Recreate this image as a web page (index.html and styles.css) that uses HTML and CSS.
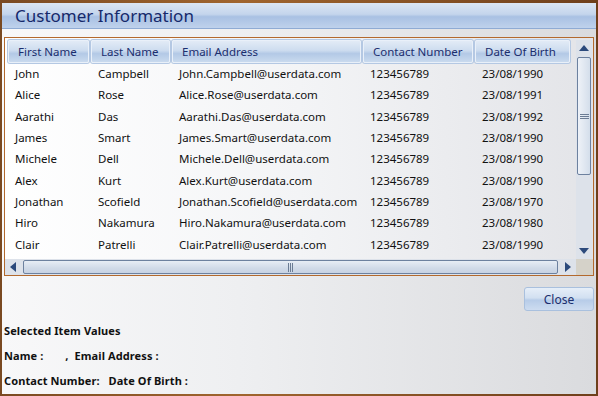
FILE: index.html
```html
<!doctype html>
<html lang="en">
<head>
  <meta charset="utf-8">
  <title>Customer Information</title>
  <link rel="stylesheet" href="styles.css">
</head>
<body>
  <div class="window">
    <div class="titleBar">Customer Information</div>
    <div class="content">
      <div class="grid">
        <div class="gridMain">
          <div class="gridTable">
            <div class="gridRow gridHeading">
              <div class="gridHead">First Name</div>
              <div class="gridHead">Last Name</div>
              <div class="gridHead">Email Address</div>
              <div class="gridHead">Contact Number</div>
              <div class="gridHead">Date Of Birth</div>
            </div>
            <div class="gridRow"><div class="gridCell">John</div><div class="gridCell">Campbell</div><div class="gridCell">John.Campbell@userdata.com</div><div class="gridCell">123456789</div><div class="gridCell">23/08/1990</div></div>
            <div class="gridRow"><div class="gridCell">Alice</div><div class="gridCell">Rose</div><div class="gridCell">Alice.Rose@userdata.com</div><div class="gridCell">123456789</div><div class="gridCell">23/08/1991</div></div>
            <div class="gridRow"><div class="gridCell">Aarathi</div><div class="gridCell">Das</div><div class="gridCell">Aarathi.Das@userdata.com</div><div class="gridCell">123456789</div><div class="gridCell">23/08/1992</div></div>
            <div class="gridRow"><div class="gridCell">James</div><div class="gridCell">Smart</div><div class="gridCell">James.Smart@userdata.com</div><div class="gridCell">123456789</div><div class="gridCell">23/08/1990</div></div>
            <div class="gridRow"><div class="gridCell">Michele</div><div class="gridCell">Dell</div><div class="gridCell">Michele.Dell@userdata.com</div><div class="gridCell">123456789</div><div class="gridCell">23/08/1990</div></div>
            <div class="gridRow"><div class="gridCell">Alex</div><div class="gridCell">Kurt</div><div class="gridCell">Alex.Kurt@userdata.com</div><div class="gridCell">123456789</div><div class="gridCell">23/08/1990</div></div>
            <div class="gridRow"><div class="gridCell">Jonathan</div><div class="gridCell">Scofield</div><div class="gridCell">Jonathan.Scofield@userdata.com</div><div class="gridCell">123456789</div><div class="gridCell">23/08/1970</div></div>
            <div class="gridRow"><div class="gridCell">Hiro</div><div class="gridCell">Nakamura</div><div class="gridCell">Hiro.Nakamura@userdata.com</div><div class="gridCell">123456789</div><div class="gridCell">23/08/1980</div></div>
            <div class="gridRow"><div class="gridCell">Clair</div><div class="gridCell">Patrelli</div><div class="gridCell">Clair.Patrelli@userdata.com</div><div class="gridCell">123456789</div><div class="gridCell">23/08/1990</div></div>
          </div>
          <div class="vScroll">
            <div class="arrowBtn"><svg width="10" height="6" viewBox="0 0 10 6"><path d="M0 6 L5 0 L10 6 Z" fill="#2c4a7c"/></svg></div>
            <div class="vThumb">
              <svg width="9" height="5" viewBox="0 0 9 5"><path d="M0 .5H9M0 2.5H9M0 4.5H9" stroke="#6b7c94" stroke-width="1"/></svg>
            </div>
            <div class="vTrack"></div>
            <div class="arrowBtn"><svg width="10" height="6" viewBox="0 0 10 6"><path d="M0 0 L5 6 L10 0 Z" fill="#2c4a7c"/></svg></div>
          </div>
        </div>
        <div class="hScrollRow">
          <div class="hScroll">
            <div class="arrowBtn"><svg width="6" height="10" viewBox="0 0 6 10"><path d="M6 0 L0 5 L6 10 Z" fill="#2c4a7c"/></svg></div>
            <div class="hThumb">
              <svg width="5" height="9" viewBox="0 0 5 9"><path d="M.5 0V9M2.5 0V9M4.5 0V9" stroke="#6b7c94" stroke-width="1"/></svg>
            </div>
            <div class="arrowBtn"><svg width="6" height="10" viewBox="0 0 6 10"><path d="M0 0 L6 5 L0 10 Z" fill="#2c4a7c"/></svg></div>
          </div>
          <div class="scrollCorner"></div>
        </div>
      </div>
      <div class="buttonRow">
        <button class="closeButton">Close</button>
      </div>
      <div class="selected">
        <div class="selectedLine">Selected Item Values</div>
        <div class="selectedLine">Name : <span class="gap"></span>, &nbsp;Email Address :</div>
        <div class="selectedLine">Contact Number: &nbsp; Date Of Birth :</div>
      </div>
    </div>
  </div>
</body>
</html>
```

FILE: styles.css
```css
html, body {
  margin: 0;
  height: 100%;
}
body {
  background: linear-gradient(to right, #7a4a22, #a0652e 40%, #6e3f1b);
  padding: 3px 2px 2px 2px;
  box-sizing: border-box;
  font-family: "Noto Sans", "DejaVu Sans", sans-serif;
}
.window {
  height: 100%;
  display: flex;
  flex-direction: column;
  background: linear-gradient(to right, #f8f8f9 0%, #eeeff1 40%, #dadbde 100%);
  box-sizing: border-box;
}
.titleBar {
  height: 26px;
  box-sizing: border-box;
  padding: 1px 0 0 13px;
  font-size: 17px;
  line-height: 24px;
  color: #15296b;
  background: linear-gradient(to bottom, #dbe6f3 0%, #c4d5ec 45%, #a9c1e3 55%, #bfd2ec 100%);
  border-bottom: 1px solid #8fabd4;
}
.content {
  flex: 1;
  display: flex;
  flex-direction: column;
  padding: 8px 2px 0 2px;
}
.grid {
  height: 239px;
  box-sizing: border-box;
  border: 1px solid #b3692d;
  display: flex;
  flex-direction: column;
  background: linear-gradient(to right, #ffffff 0%, #f3f4f6 50%, #e3e4e8 100%);
}
.gridMain {
  flex: 1;
  display: flex;
  min-height: 0;
}
.gridTable {
  flex: 1;
  padding: 2px 4px 0 3px;
  overflow: hidden;
}
.gridRow {
  display: grid;
  grid-template-columns: 83px 81px 191px 112px 97px;
  height: 21.3px;
  align-items: center;
  font-size: 11.5px;
  color: #111;
}
.gridHeading {
  height: 23px;
}
.gridHead {
  height: 23px;
  box-sizing: border-box;
  margin-right: 2px;
  padding-left: 9px;
  line-height: 21px;
  font-size: 11.5px;
  color: #1b2e6e;
  border: 1px solid #e9f0f9;
  border-radius: 2px;
  box-shadow: 0 0 0 1px #b4c8e3;
  background: linear-gradient(to bottom, #e2ebf6 0%, #cddcef 45%, #b3c9e6 60%, #c9daee 100%);
}
.gridCell {
  padding-left: 7px;
  white-space: nowrap;
}
.vScroll {
  width: 16px;
  margin: 2px 1px 0 0;
  display: flex;
  flex-direction: column;
  background: #dde2ea;
}
.arrowBtn {
  width: 16px;
  height: 16px;
  display: flex;
  align-items: center;
  justify-content: center;
  flex-shrink: 0;
}
.vThumb {
  height: 118px;
  margin: 1px 1px;
  box-sizing: border-box;
  border: 1px solid #6d819f;
  border-radius: 2px;
  background: linear-gradient(to right, #eef2f8, #d4deeb);
  display: flex;
  align-items: center;
  justify-content: center;
}
.vTrack {
  flex: 1;
}
.hScrollRow {
  height: 16px;
  display: flex;
}
.hScroll {
  flex: 1;
  display: flex;
  background: #dde2ea;
}
.hThumb {
  flex: 1;
  box-sizing: border-box;
  margin: 1px 2px;
  border: 1px solid #6d819f;
  border-radius: 2px;
  background: linear-gradient(to bottom, #e7edf5 0%, #d0dae8 60%, #c8d3e3 100%);
  display: flex;
  align-items: center;
  justify-content: center;
}
.scrollCorner {
  width: 17px;
  background: #d5d2c9;
}
.buttonRow {
  display: flex;
  justify-content: flex-end;
  padding-top: 11px;
}
.closeButton {
  width: 70px;
  height: 24px;
  font-family: "Noto Sans", "DejaVu Sans", sans-serif;
  font-size: 12px;
  color: #1b2e6e;
  border: 1px solid #a9c0de;
  border-radius: 3px;
  background: linear-gradient(to bottom, #e6eef8 0%, #d2e0f1 45%, #b7cce8 55%, #cddcf0 100%);
  padding: 0;
}
.selected {
  padding-top: 8px;
}
.selectedLine {
  font-size: 11px;
  font-weight: bold;
  color: #111;
  height: 25px;
  line-height: 24px;
  letter-spacing: 0.1px;
}
.gap {
  display: inline-block;
  width: 19px;
}
```
